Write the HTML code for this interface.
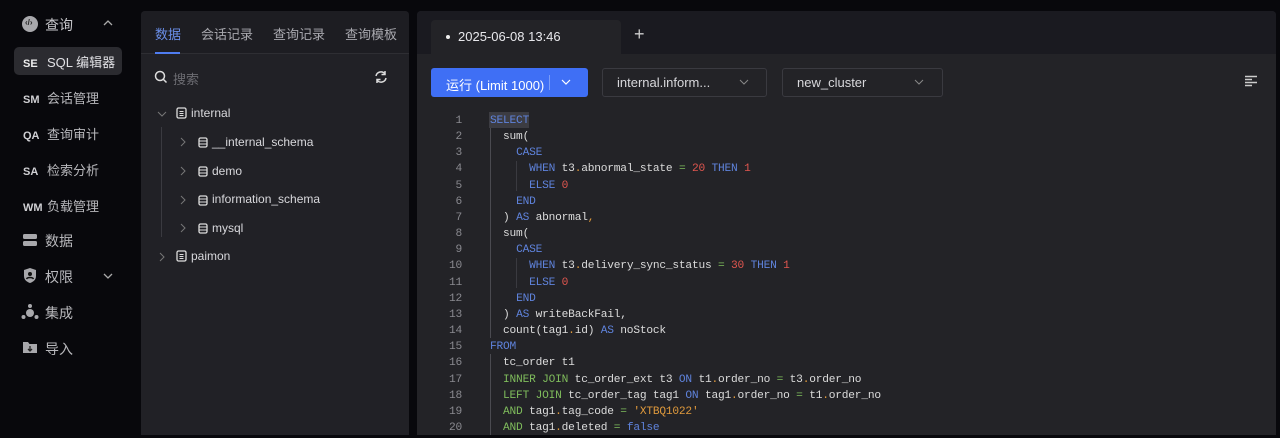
<!DOCTYPE html>
<html><head><meta charset="utf-8"><style>
*{margin:0;padding:0;box-sizing:border-box}
html,body{width:1280px;height:438px;overflow:hidden}
body{background:#08080c;font-family:"Liberation Sans","Noto Sans CJK SC",sans-serif;color:#c8c8cc;position:relative}
.a{position:absolute}
.nav{font-size:13px;color:#b8b8bc}
.ab{font-weight:bold;font-size:11px;color:#d0d0d4;display:inline-block;width:24px}
.mono{position:absolute;left:0;top:3px;width:1280px;height:432px;overflow:hidden;font-family:"Liberation Mono","DejaVu Sans Mono",monospace;font-size:11.2px;letter-spacing:-0.2px;white-space:pre}
.k{color:#5f83dc}.g{color:#7fbc5c}.r{color:#e0564f}.o{color:#e09a3c}.p{color:#d4d4d4}
.ln{position:absolute;left:430px;width:32px;text-align:right;color:#8a8a90}
.cl{position:absolute;left:490px;color:#dcdcdc}
.tr{font-size:12px;color:#d8d8dc}
</style></head><body>
<!-- sidebar -->
<div class="a" style="left:22px;top:16px;width:16px;height:16px;border-radius:50%;background:#a8a8ac"></div>
<div class="a" style="left:25px;top:18px;font-size:8px;color:#222;font-weight:bold">‹/›</div>
<div class="a nav" style="left:45px;top:15px;font-size:14px;color:#c8c8cc">查询</div>
<svg class="a" style="left:102px;top:19px" width="12" height="8"><path d="M2 6l4-4 4 4" stroke="#aaa" fill="none" stroke-width="1.3"/></svg>
<div class="a" style="left:14px;top:47px;width:108px;height:28px;border-radius:5px;background:#2b2b30"></div>
<div class="a nav" style="left:23px;top:52px;color:#e0e0e4"><span class="ab" style="color:#eee">SE</span>SQL 编辑器</div>
<div class="a nav" style="left:23px;top:88px"><span class="ab">SM</span>会话管理</div>
<div class="a nav" style="left:23px;top:124px"><span class="ab">QA</span>查询审计</div>
<div class="a nav" style="left:23px;top:160px"><span class="ab">SA</span>检索分析</div>
<div class="a nav" style="left:23px;top:196px"><span class="ab">WM</span>负载管理</div>
<svg class="a" style="left:22px;top:233px" width="16" height="14"><rect x="1" y="1" width="14" height="5" rx="1.5" fill="#a8a8ac"/><rect x="1" y="8" width="14" height="5" rx="1.5" fill="#a8a8ac"/></svg>
<div class="a nav" style="left:45px;top:231px;font-size:14px">数据</div>
<svg class="a" style="left:22px;top:267px" width="16" height="17"><path d="M8 1l6 2v6c0 4-3 6-6 7-3-1-6-3-6-7V3z" fill="#a8a8ac"/><circle cx="8" cy="7" r="2" fill="#111"/><path d="M4.5 12c1-2 6-2 7 0" stroke="#111" stroke-width="1.4" fill="none"/></svg>
<div class="a nav" style="left:45px;top:267px;font-size:14px">权限</div>
<svg class="a" style="left:102px;top:272px" width="12" height="8"><path d="M2 2l4 4 4-4" stroke="#aaa" fill="none" stroke-width="1.3"/></svg>
<svg class="a" style="left:21px;top:303px" width="18" height="17"><circle cx="9" cy="10" r="4" fill="#a8a8ac"/><circle cx="9" cy="3" r="2" fill="#a8a8ac"/><circle cx="2.5" cy="14" r="2" fill="#a8a8ac"/><circle cx="15.5" cy="14" r="2" fill="#a8a8ac"/></svg>
<div class="a nav" style="left:45px;top:303px;font-size:14px">集成</div>
<svg class="a" style="left:22px;top:340px" width="16" height="14"><path d="M1 2h5l1.5 2H15v9H1z" fill="#a8a8ac"/><path d="M8 6v5M6 9l2 2 2-2" stroke="#222" stroke-width="1.3" fill="none"/></svg>
<div class="a nav" style="left:45px;top:339px;font-size:14px">导入</div>

<!-- data panel -->
<div class="a" style="left:141px;top:11px;width:268px;height:427px;background:#212126;border-radius:4px 4px 0 0"></div>
<div class="a" style="left:141px;top:11px;width:268px;height:43px;background:#1d1d22;border-bottom:1px solid #2e2e33;border-radius:4px 4px 0 0"></div>
<div class="a" style="left:155px;top:24px;font-size:13px;color:#6a8ee8">数据</div>
<div class="a" style="left:155px;top:52px;width:25px;height:2px;background:#4f7cf0"></div>
<div class="a" style="left:201px;top:24px;font-size:13px;color:#a8a8ae">会话记录</div>
<div class="a" style="left:273px;top:24px;font-size:13px;color:#a8a8ae">查询记录</div>
<div class="a" style="left:345px;top:24px;font-size:13px;color:#a8a8ae">查询模板</div>
<svg class="a" style="left:154px;top:70px" width="14" height="14"><circle cx="6" cy="6" r="4.5" stroke="#ddd" stroke-width="1.5" fill="none"/><path d="M9.5 9.5l3 3" stroke="#ddd" stroke-width="1.5"/></svg>
<div class="a" style="left:173px;top:69px;font-size:13px;color:#6c6c72">搜索</div>
<svg class="a" style="left:374px;top:70px" width="14" height="14"><path d="M2 6a5 5 0 0 1 9-2M12 8a5 5 0 0 1-9 2" stroke="#ddd" stroke-width="1.5" fill="none"/><path d="M11 1v3.5H7.5M3 13V9.5h3.5" stroke="#ddd" stroke-width="1.5" fill="none"/></svg>
<svg class="a" style="left:157px;top:110px" width="10" height="8"><path d="M1 2l4 4 4-4" stroke="#777" fill="none"/></svg>
<svg class="a" style="left:176px;top:107px" width="11" height="12"><rect x="1" y="1" width="9" height="10" rx="1.5" stroke="#ddd" stroke-width="1.3" fill="none"/><path d="M3.5 4.5h4M3.5 6.5h4M3.5 8.5h4" stroke="#ddd"/></svg>
<div class="a tr" style="left:191px;top:106px">internal</div>
<div class="a" style="left:161px;top:127px;width:1px;height:110px;background:#3a3a40"></div>
<svg class="a" style="left:179px;top:137px" width="8" height="10"><path d="M2 1l4 4-4 4" stroke="#777" fill="none"/></svg>
<svg class="a" style="left:198px;top:137px" width="10" height="11"><rect x="1" y="1" width="8" height="9" rx="1.5" stroke="#ddd" stroke-width="1.3" fill="none"/><path d="M1 4h8M1 7h8" stroke="#ddd"/></svg>
<div class="a tr" style="left:212px;top:135px">__internal_schema</div>
<svg class="a" style="left:179px;top:166px" width="8" height="10"><path d="M2 1l4 4-4 4" stroke="#777" fill="none"/></svg>
<svg class="a" style="left:198px;top:166px" width="10" height="11"><rect x="1" y="1" width="8" height="9" rx="1.5" stroke="#ddd" stroke-width="1.3" fill="none"/><path d="M1 4h8M1 7h8" stroke="#ddd"/></svg>
<div class="a tr" style="left:212px;top:164px">demo</div>
<svg class="a" style="left:179px;top:195px" width="8" height="10"><path d="M2 1l4 4-4 4" stroke="#777" fill="none"/></svg>
<svg class="a" style="left:198px;top:195px" width="10" height="11"><rect x="1" y="1" width="8" height="9" rx="1.5" stroke="#ddd" stroke-width="1.3" fill="none"/><path d="M1 4h8M1 7h8" stroke="#ddd"/></svg>
<div class="a tr" style="left:212px;top:192px">information_schema</div>
<svg class="a" style="left:179px;top:223px" width="8" height="10"><path d="M2 1l4 4-4 4" stroke="#777" fill="none"/></svg>
<svg class="a" style="left:198px;top:223px" width="10" height="11"><rect x="1" y="1" width="8" height="9" rx="1.5" stroke="#ddd" stroke-width="1.3" fill="none"/><path d="M1 4h8M1 7h8" stroke="#ddd"/></svg>
<div class="a tr" style="left:212px;top:221px">mysql</div>
<svg class="a" style="left:158px;top:252px" width="8" height="10"><path d="M2 1l4 4-4 4" stroke="#777" fill="none"/></svg>
<svg class="a" style="left:176px;top:250px" width="11" height="12"><rect x="1" y="1" width="9" height="10" rx="1.5" stroke="#ddd" stroke-width="1.3" fill="none"/><path d="M3.5 4.5h4M3.5 6.5h4M3.5 8.5h4" stroke="#ddd"/></svg>
<div class="a tr" style="left:191px;top:249px">paimon</div>

<!-- editor panel -->
<div class="a" style="left:417px;top:11px;width:859px;height:427px;background:#232327;border-radius:4px 4px 0 0"></div>
<div class="a" style="left:417px;top:11px;width:859px;height:43px;background:#1a1a20;border-radius:4px 4px 0 0"></div>
<div class="a" style="left:431px;top:20px;width:190px;height:34px;background:#232327;border-radius:4px 4px 0 0"></div>
<div class="a" style="left:446px;top:35px;width:4px;height:4px;border-radius:50%;background:#eee"></div>
<div class="a" style="left:458px;top:29px;font-size:13px;color:#e8e8ec">2025-06-08 13:46</div>
<div class="a" style="left:634px;top:24px;font-size:18px;color:#ccc;font-weight:300">+</div>
<div class="a" style="left:431px;top:68px;width:157px;height:29px;background:#3f6ff5;border-radius:3px"></div>
<div class="a" style="left:446px;top:75px;font-size:13px;color:#fff">运行 (Limit 1000)</div>
<div class="a" style="left:549px;top:75px;width:1px;height:15px;background:#7a9cf8"></div>
<svg class="a" style="left:561px;top:79px" width="10" height="7"><path d="M1 1l4 4 4-4" stroke="#fff" fill="none" stroke-width="1.2"/></svg>
<div class="a" style="left:602px;top:68px;width:165px;height:29px;border:1px solid #3a3a40;border-radius:3px"></div>
<div class="a" style="left:617px;top:75px;font-size:13px;color:#d8d8dc">internal.inform...</div>
<svg class="a" style="left:739px;top:79px" width="10" height="7"><path d="M1 1l4 4 4-4" stroke="#888" fill="none"/></svg>
<div class="a" style="left:782px;top:68px;width:161px;height:29px;border:1px solid #3a3a40;border-radius:3px"></div>
<div class="a" style="left:797px;top:75px;font-size:13px;color:#d8d8dc">new_cluster</div>
<svg class="a" style="left:914px;top:79px" width="10" height="7"><path d="M1 1l4 4 4-4" stroke="#888" fill="none"/></svg>
<svg class="a" style="left:1245px;top:75px" width="13" height="13"><path d="M0 1.5h12M0 4.5h7M0 7.5h12M0 10.5h7" stroke="#ccc" stroke-width="1.4"/></svg>

<!-- code -->
<div class="a" style="left:489px;top:112px;width:40px;height:16px;background:#3c3c42"></div>
<div class="a" style="left:490px;top:128px;width:1px;height:210px;background:#4a4a50"></div>
<div class="a" style="left:516px;top:161px;width:1px;height:30px;background:#3a3a40"></div>
<div class="a" style="left:516px;top:258px;width:1px;height:30px;background:#3a3a40"></div>
<div class="a" style="left:490px;top:354px;width:1px;height:81px;background:#4a4a50"></div>
<div class="mono">
<div class="ln" style="top:112px">1</div><div class="cl" style="top:112px"><span class="k">SELECT</span></div>
<div class="ln" style="top:128px">2</div><div class="cl" style="top:128px">  sum(</div>
<div class="ln" style="top:144px">3</div><div class="cl" style="top:144px">    <span class="k">CASE</span></div>
<div class="ln" style="top:160px">4</div><div class="cl" style="top:160px">      <span class="k">WHEN</span> t3<span class="o">.</span>abnormal_state <span class="g">=</span> <span class="r">20</span> <span class="k">THEN</span> <span class="r">1</span></div>
<div class="ln" style="top:177px">5</div><div class="cl" style="top:177px">      <span class="k">ELSE</span> <span class="r">0</span></div>
<div class="ln" style="top:193px">6</div><div class="cl" style="top:193px">    <span class="k">END</span></div>
<div class="ln" style="top:209px">7</div><div class="cl" style="top:209px">  ) <span class="k">AS</span> abnormal<span class="o">,</span></div>
<div class="ln" style="top:225px">8</div><div class="cl" style="top:225px">  sum(</div>
<div class="ln" style="top:241px">9</div><div class="cl" style="top:241px">    <span class="k">CASE</span></div>
<div class="ln" style="top:257px">10</div><div class="cl" style="top:257px">      <span class="k">WHEN</span> t3<span class="o">.</span>delivery_sync_status <span class="g">=</span> <span class="r">30</span> <span class="k">THEN</span> <span class="r">1</span></div>
<div class="ln" style="top:274px">11</div><div class="cl" style="top:274px">      <span class="k">ELSE</span> <span class="r">0</span></div>
<div class="ln" style="top:290px">12</div><div class="cl" style="top:290px">    <span class="k">END</span></div>
<div class="ln" style="top:306px">13</div><div class="cl" style="top:306px">  ) <span class="k">AS</span> writeBackFail,</div>
<div class="ln" style="top:322px">14</div><div class="cl" style="top:322px">  count(tag1<span class="o">.</span>id) <span class="k">AS</span> noStock</div>
<div class="ln" style="top:338px">15</div><div class="cl" style="top:338px"><span class="k">FROM</span></div>
<div class="ln" style="top:354px">16</div><div class="cl" style="top:354px">  tc_order t1</div>
<div class="ln" style="top:371px">17</div><div class="cl" style="top:371px">  <span class="g">INNER JOIN</span> tc_order_ext t3 <span class="k">ON</span> t1<span class="o">.</span>order_no <span class="g">=</span> t3<span class="o">.</span>order_no</div>
<div class="ln" style="top:387px">18</div><div class="cl" style="top:387px">  <span class="g">LEFT JOIN</span> tc_order_tag tag1 <span class="k">ON</span> tag1<span class="o">.</span>order_no <span class="g">=</span> t1<span class="o">.</span>order_no</div>
<div class="ln" style="top:403px">19</div><div class="cl" style="top:403px">  <span class="g">AND</span> tag1<span class="o">.</span>tag_code <span class="g">=</span> <span class="o">'XTBQ1022'</span></div>
<div class="ln" style="top:419px">20</div><div class="cl" style="top:419px">  <span class="g">AND</span> tag1<span class="o">.</span>deleted <span class="g">=</span> <span class="k">false</span></div>
</div>
<div class="a" style="left:0;top:435px;width:1280px;height:3px;background:#08080c"></div>
</body></html>
